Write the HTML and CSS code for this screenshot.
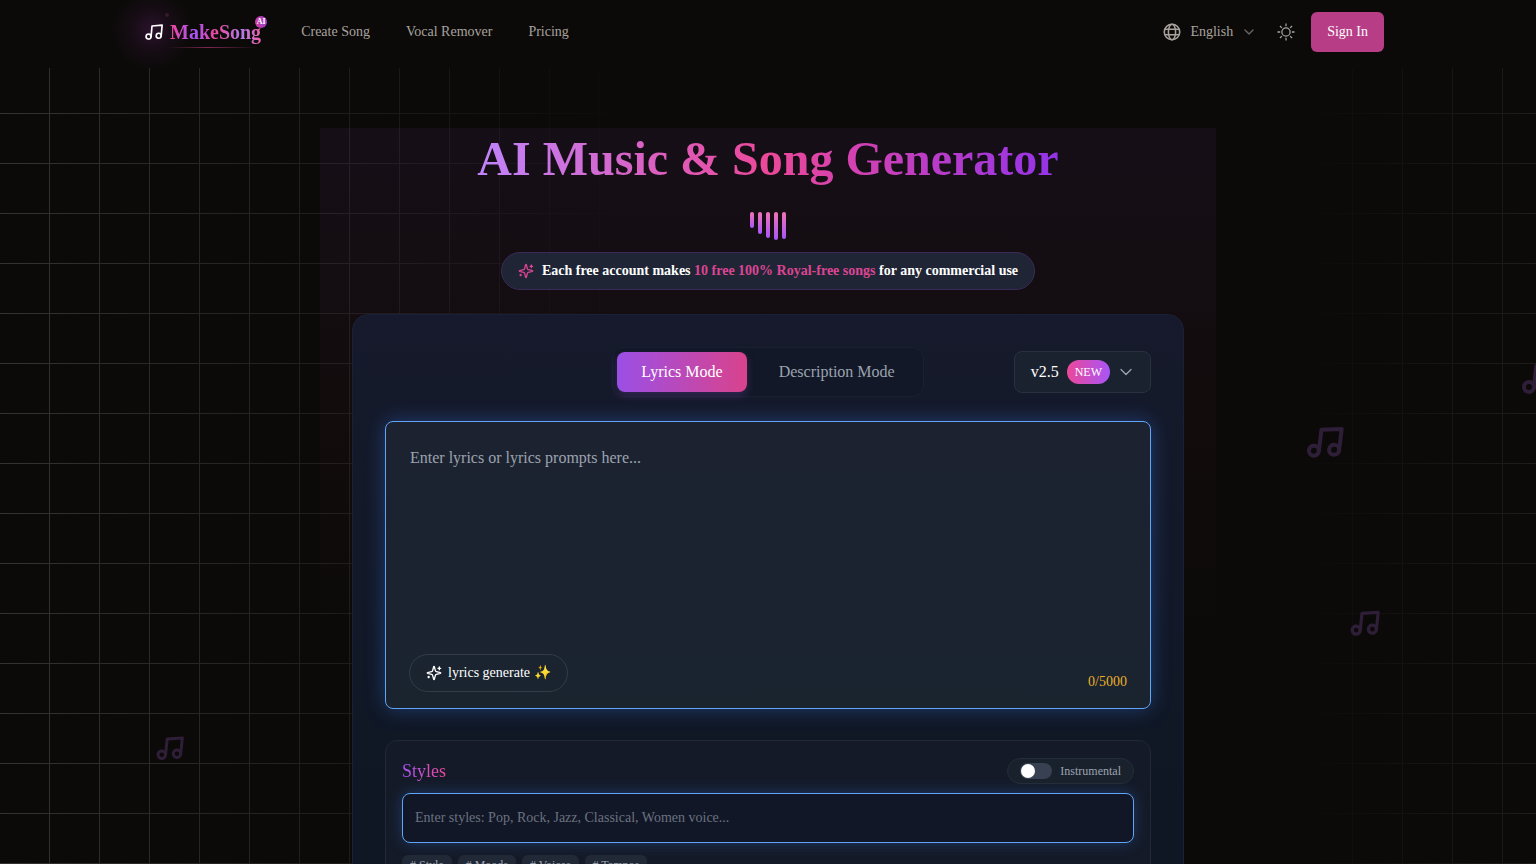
FILE: index.html
```html
<!DOCTYPE html>
<html lang="en">
<head>
<meta charset="utf-8">
<meta name="viewport" content="width=device-width, initial-scale=1">
<title>AI Music &amp; Song Generator</title>
<link rel="stylesheet" href="styles.css">
</head>
<body>
<svg class="defs" aria-hidden="true">
  <symbol id="music" viewBox="0 0 24 24"><path d="M9 18V5l12-2v13"/><circle cx="6" cy="18" r="3"/><circle cx="18" cy="16" r="3"/></symbol>
  <symbol id="chevron" viewBox="0 0 24 24"><path d="m6 9 6 6 6-6"/></symbol>
  <symbol id="chevron-wide" viewBox="0 0 24 24"><path d="m19.5 8.250-7.500 7.500-7.500-7.500"/></symbol>
  <symbol id="sparkles" viewBox="0 0 24 24"><path d="M9.94 15.5A2 2 0 0 0 8.5 14.06l-6.14-1.58a.5.5 0 0 1 0-.96L8.5 9.94A2 2 0 0 0 9.94 8.5l1.58-6.14a.5.5 0 0 1 .96 0L14.06 8.5A2 2 0 0 0 15.5 9.94l6.14 1.58a.5.5 0 0 1 0 .96L15.5 14.06a2 2 0 0 0-1.44 1.44l-1.58 6.14a.5.5 0 0 1-.96 0z"/><path d="M20 3v4M22 5h-4M4 17v2M5 18H3"/></symbol>
</svg>
<header class="header">
  <div class="header-inner">
    <a class="logo" href="#">
      <svg class="icon logo-note"><use href="#music"/></svg>
      <span class="logo-text">MakeSong</span>
      <span class="logo-dot"></span>
      <span class="logo-badge">AI</span>
    </a>
    <nav class="nav">
      <a href="#">Create Song</a>
      <a href="#">Vocal Remover</a>
      <a href="#">Pricing</a>
    </nav>
    <div class="tools">
      <button class="tool language" type="button" aria-haspopup="listbox">
        <svg class="globe" viewBox="0 0 20 20"><circle cx="10" cy="10" r="8.6"/><ellipse cx="10" cy="10" rx="4" ry="8.6"/><path d="M2 7h16M2 13h16"/></svg>
        <span>English</span>
        <svg class="icon icon-16 dim"><use href="#chevron"/></svg>
      </button>
      <button class="tool" type="button" aria-label="Toggle theme">
        <svg class="sun" viewBox="0 0 20 20"><circle cx="10" cy="10" r="4.6"/><path d="M10 .5v3M10 16.500v3M.5 10h3M16.500 10h3M3.300 3.300l2.100 2.100M14.600 14.600l2.100 2.100M3.300 16.700l2.100-2.100M14.600 5.400l2.100-2.100"/></svg>
      </button>
      <button class="sign-in" type="button">Sign In</button>
    </div>
  </div>
</header>
<main class="main">
  <div class="grid-lines grid-left"></div>
  <div class="grid-lines grid-right"></div>
  <svg class="icon note note-a"><use href="#music"/></svg>
  <svg class="icon note note-b"><use href="#music"/></svg>
  <svg class="icon note note-c"><use href="#music"/></svg>
  <svg class="icon note note-d"><use href="#music"/></svg>
  <section class="hero">
    <h1 class="title">AI Music &amp; Song Generator</h1>
    <div class="bars" aria-hidden="true"><i class="bar b1"></i><i class="bar b2"></i><i class="bar b3"></i><i class="bar b4"></i><i class="bar b5"></i></div>
    <p class="offer">
      <svg class="icon icon-16"><use href="#sparkles"/></svg>
      <span>Each free account makes <em>10 free 100% Royal-free songs</em> for any commercial use</span>
    </p>
    <form class="card">
      <div class="mode-row">
        <div class="tabs" role="tablist">
          <button class="tab active" type="button" role="tab" aria-selected="true">Lyrics Mode</button>
          <button class="tab" type="button" role="tab" aria-selected="false">Description Mode</button>
        </div>
        <button class="version" type="button" aria-haspopup="listbox">
          <span>v2.5</span><span class="new">NEW</span>
          <svg class="icon icon-16"><use href="#chevron-wide"/></svg>
        </button>
      </div>
      <div class="lyrics">
        <textarea class="lyrics-input" aria-label="Lyrics" placeholder="Enter lyrics or lyrics prompts here..."></textarea>
        <div class="lyrics-foot">
          <button class="generate" type="button"><svg class="icon icon-16"><use href="#sparkles"/></svg><span>lyrics generate ✨</span></button>
          <span class="count">0/5000</span>
        </div>
      </div>
      <div class="styles">
        <div class="styles-head">
          <label class="styles-label" for="styles-input">Styles</label>
          <label class="instrumental"><input class="switch" type="checkbox" role="switch"><span>Instrumental</span></label>
        </div>
        <input class="styles-input" id="styles-input" type="text" placeholder="Enter styles: Pop, Rock, Jazz, Classical, Women voice...">
        <div class="chips">
          <button class="chip" type="button"># Style</button>
          <button class="chip" type="button"># Moods</button>
          <button class="chip" type="button"># Voices</button>
          <button class="chip" type="button"># Tempos</button>
        </div>
      </div>
    </form>
  </section>
</main>
</body>
</html>
```

FILE: styles.css
```css
* { box-sizing: border-box; }
body {
  margin: 0;
  min-height: 100vh;
  background: #0c0a09;
  color: #fff;
  font: 14px/20px "Liberation Serif", "Times New Roman", serif;
  -webkit-font-smoothing: antialiased;
}
button, input, textarea { font: inherit; color: inherit; }
button { border: 0; background: none; padding: 0; cursor: pointer; }
a { color: inherit; text-decoration: none; }
.defs { position: absolute; width: 0; height: 0; }
.icon { width: 20px; height: 20px; flex: none; fill: none; stroke: currentColor; stroke-width: 2; stroke-linecap: round; stroke-linejoin: round; overflow: visible; }
.icon-16 { width: 16px; height: 16px; }
.dim { opacity: 0.6; }

.header { position: relative; z-index: 1; color: #a8a29e; }
.header-inner {
  display: flex;
  align-items: center;
  max-width: 1280px;
  height: 64px;
  margin: 0 auto;
  padding: 0 24px 0 16px;
}
.logo { position: relative; display: flex; align-items: center; gap: 6px; height: 32px; color: #fff; }
.logo::before {
  content: "";
  position: absolute;
  left: -32px;
  top: -26px;
  width: 80px;
  height: 80px;
  background: radial-gradient(closest-side, rgba(168, 50, 190, 0.2), rgba(168, 50, 190, 0.06) 55%, transparent);
}
.logo::after {
  content: "";
  position: absolute;
  left: 24px;
  right: 4px;
  bottom: 0;
  height: 1px;
  background: linear-gradient(90deg, transparent, rgba(236, 72, 153, 0.5) 45%, transparent);
}
.logo-note { position: relative; transform: rotate(5deg); }
.logo-text {
  position: relative;
  font-size: 20px;
  line-height: 28px;
  font-weight: 700;
  background: linear-gradient(90deg, #ec4899, #a855f7 27%, #ec4899 50%, #b07ae8 78%, #ec5fa8);
  -webkit-background-clip: text;
  background-clip: text;
  color: transparent;
}
.logo-dot { position: absolute; left: 21px; top: -3px; width: 4px; height: 4px; border-radius: 50%; background: #341b30; }
.logo-badge {
  position: absolute;
  right: -6px;
  top: 0;
  width: 12px;
  height: 12px;
  border-radius: 50%;
  background: linear-gradient(90deg, #d03c9c, #9b3fd0);
  font-size: 8px;
  line-height: 12px;
  font-weight: 700;
  text-align: center;
}
.nav { display: flex; gap: 36px; margin-left: 40px; }
.tools { display: flex; align-items: center; gap: 16px; margin-left: auto; }
.tool { display: flex; align-items: center; gap: 8px; color: #a8a29e; }
.language { margin-right: 4px; }
.globe, .sun { width: 18px; height: 18px; fill: none; stroke: currentColor; stroke-width: 1.7; }
.language .globe { margin-right: 1px; }
.sun { stroke-width: 1.4; }
.sign-in { height: 40px; padding: 0 16px; border-radius: 6px; background: #b83d87; color: #fff; font-weight: 500; }

.main { position: relative; padding-top: 64px; overflow: hidden; }
.grid-lines {
  position: absolute;
  top: 4px;
  bottom: 0;
  background-image: linear-gradient(90deg, transparent 49px, #fff 49px), linear-gradient(transparent 49px, #fff 49px);
  background-size: 50px 50px;
  background-position: 0 -4px;
}
.grid-left {
  left: 0;
  width: 42%;
  -webkit-mask-image: linear-gradient(90deg, rgba(0, 0, 0, 0.17), transparent);
  mask-image: linear-gradient(90deg, rgba(0, 0, 0, 0.17), transparent);
}
.grid-right {
  right: 0;
  width: 16%;
  background-position: 13px -4px;
  -webkit-mask-image: linear-gradient(270deg, rgba(0, 0, 0, 0.08), transparent);
  mask-image: linear-gradient(270deg, rgba(0, 0, 0, 0.08), transparent);
}
.note { position: absolute; color: #2e1e38; stroke-width: 2.4; }
.note-a { right: 191px; top: 358px; width: 40px; height: 40px; transform: rotate(7deg); }
.note-b { right: 155px; top: 543px; width: 32px; height: 32px; transform: rotate(6deg); }
.note-c { left: 155px; top: 669px; width: 30px; height: 30px; transform: rotate(6deg); }
.note-d { right: -24px; top: 294px; width: 40px; height: 40px; transform: rotate(6deg); }

.hero {
  position: relative;
  display: flex;
  flex-direction: column;
  align-items: center;
  max-width: 896px;
  margin: 0 auto;
  padding: 0 32px 48px;
  background: linear-gradient(rgba(168, 85, 247, 0.06), rgba(236, 72, 153, 0.03) 250px, transparent 500px);
}
.title {
  margin: 0 0 22px;
  font-size: 48px;
  line-height: 62px;
  font-weight: 700;
  text-align: center;
  background: linear-gradient(90deg, #c084fc, #ec4899 50%, #9333ea);
  -webkit-background-clip: text;
  background-clip: text;
  color: transparent;
}
.bars { display: flex; gap: 4px; height: 28px; margin-bottom: 12px; }
.bar { width: 4px; border-radius: 2px; background: linear-gradient(#f472b6, #a855f7); }
.b1 { height: 16px; }
.b2 { height: 22px; }
.b3 { height: 26px; }
.b4 { height: 28px; }
.b5 { height: 27px; }
.offer {
  display: flex;
  align-items: center;
  gap: 8px;
  min-height: 38px;
  margin: 0 0 24px;
  padding: 0 16px;
  border: 1px solid #3b2b5c;
  border-radius: 19px;
  background: #1f2534;
  font-weight: 700;
}
.offer .icon, .offer em { color: #db4593; font-style: normal; }

.card {
  width: 100%;
  padding: 32px;
  border: 1px solid #1a2136;
  border-radius: 16px;
  background: linear-gradient(#161a2c, #0f1724 500px);
}
.mode-row { display: grid; grid-template-columns: 1fr auto 1fr; align-items: center; margin-bottom: 24px; font-size: 16px; line-height: 24px; }
.tabs { grid-column: 2; display: flex; gap: 8px; padding: 4px; border: 1px solid #1a2030; border-radius: 12px; background: #121827; }
.tab { height: 40px; padding: 0 24px; border-radius: 8px; color: #9ca3af; }
.tab.active { color: #fff; background: linear-gradient(90deg, #9b4fe6, #d9438c); box-shadow: 0 4px 8px rgba(168, 85, 247, 0.22); }
.version { justify-self: end; display: flex; align-items: center; gap: 8px; height: 42px; padding: 0 16px; border: 1px solid #29313e; border-radius: 8px; background: #1b222f; }
.version .icon { color: #9ca3af; }
.new { padding: 0 8px; border-radius: 12px; background: linear-gradient(90deg, #ec4899, #a855f7); font-size: 12px; }
.lyrics {
  display: flex;
  flex-direction: column;
  margin-bottom: 31px;
  border: 1px solid #60a5fa;
  border-radius: 8px;
  background: linear-gradient(#1c2230, #1a242f);
  box-shadow: 0 0 20px rgba(59, 130, 246, 0.35);
}
.lyrics-input { height: 232px; padding: 24px; border: 0; outline: 0; resize: none; background: none; font-size: 16px; line-height: 24px; }
.lyrics-input::placeholder { color: #9ca3af; }
.lyrics-foot { display: flex; align-items: center; justify-content: space-between; padding: 0 23px 16px; }
.generate { display: flex; align-items: center; gap: 6px; height: 38px; padding: 0 16px; border: 1px solid #323b46; border-radius: 19px; }
.count { align-self: flex-end; color: #eab02c; }
.styles { padding: 16px; border: 1px solid #212936; border-radius: 12px; background: #141a27; }
.styles-head { display: flex; align-items: center; justify-content: space-between; margin-bottom: 8px; }
.styles-label {
  font-size: 18px;
  line-height: 28px;
  background: linear-gradient(90deg, #a855f7, #ec4899);
  -webkit-background-clip: text;
  background-clip: text;
  color: transparent;
}
.instrumental { display: flex; align-items: center; gap: 8px; height: 26px; padding: 0 12px; border: 1px solid #242d39; border-radius: 13px; background: #19212d; color: #9ca3af; font-size: 12px; line-height: 16px; }
.switch { appearance: none; width: 32px; height: 16px; margin: 0; padding: 1px; border-radius: 8px; background: #374151; }
.switch::before { content: ""; display: block; width: 14px; height: 14px; border-radius: 50%; background: #fff; }
.switch:checked::before { margin-left: 16px; }
.styles-input { display: block; width: 100%; height: 50px; padding: 0 12px; border: 1px solid #60a5fa; border-radius: 8px; outline: 0; background: #111726; box-shadow: 0 0 15px rgba(59, 130, 246, 0.3); }
.styles-input::placeholder { color: #6b7280; }
.chips { display: flex; gap: 6px; margin-top: 12px; }
.chip { height: 20px; padding: 0 8px; border-radius: 6px; background: #212836; color: #9ca3af; font-size: 12px; line-height: 16px; }
```
